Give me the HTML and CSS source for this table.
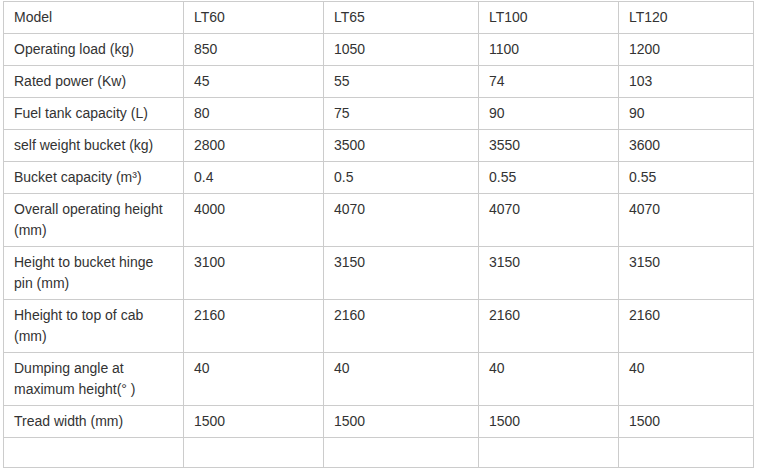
FILE: index.html
```html
<!DOCTYPE html>
<html>
<head>
<meta charset="utf-8">
<link rel="stylesheet" href="styles.css">
</head>
<body>
<div class="wrap">
<table class="spec">
<colgroup>
<col class="c1"><col class="c2"><col class="c3"><col class="c4"><col class="c5">
</colgroup>
<tbody>
<tr><td>Model</td><td>LT60</td><td>LT65</td><td>LT100</td><td>LT120</td></tr>
<tr><td>Operating load (kg)</td><td>850</td><td>1050</td><td>1100</td><td>1200</td></tr>
<tr><td>Rated power (Kw)</td><td>45</td><td>55</td><td>74</td><td>103</td></tr>
<tr><td>Fuel tank capacity (L)</td><td>80</td><td>75</td><td>90</td><td>90</td></tr>
<tr><td>self weight bucket (kg)</td><td>2800</td><td>3500</td><td>3550</td><td>3600</td></tr>
<tr><td>Bucket capacity (m³)</td><td>0.4</td><td>0.5</td><td>0.55</td><td>0.55</td></tr>
<tr><td>Overall operating height (mm)</td><td>4000</td><td>4070</td><td>4070</td><td>4070</td></tr>
<tr><td>Height to bucket hinge pin (mm)</td><td>3100</td><td>3150</td><td>3150</td><td>3150</td></tr>
<tr><td>Hheight to top of cab (mm)</td><td>2160</td><td>2160</td><td>2160</td><td>2160</td></tr>
<tr><td>Dumping angle at maximum height(° )</td><td>40</td><td>40</td><td>40</td><td>40</td></tr>
<tr><td>Tread width (mm)</td><td>1500</td><td>1500</td><td>1500</td><td>1500</td></tr>
<tr class="empty"><td></td><td></td><td></td><td></td><td></td></tr>
</tbody>
</table>
</div>
</body>
</html>
```

FILE: styles.css
```css
html, body {
  margin: 0;
  padding: 0;
  background: #fff;
}
.wrap {
  padding: 1px 0 0 3px;
}
.spec {
  border-collapse: collapse;
  table-layout: fixed;
  width: 750px;
  font-family: "Liberation Sans", Arial, sans-serif;
  font-size: 14px;
  line-height: 21px;
  color: #333;
}
.c1 { width: 180px; }
.c2 { width: 140px; }
.c3 { width: 155px; }
.c4 { width: 140px; }
.c5 { width: 135px; }
.spec td {
  border: 1px solid #ccc;
  padding: 5px 10px;
  vertical-align: top;
  text-align: left;
}
.spec tr.empty td {
  height: 19px;
}
```
